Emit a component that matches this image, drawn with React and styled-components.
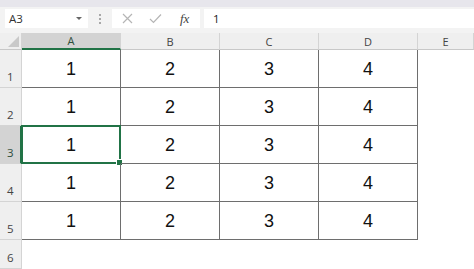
import React from 'react';
import styled, { createGlobalStyle } from 'styled-components';

const GlobalStyle = createGlobalStyle`
  html, body {
    margin: 0;
    padding: 0;
    background: #ffffff;
    overflow: hidden;
  }
  body {
    font-family: "Open Sans", "Noto Sans", sans-serif;
  }
`;

const green = '#217346';

const Page = styled.div`
  width: 474px;
  height: 269px;
  display: flex;
  flex-direction: column;
  overflow: hidden;
`;

const TopStrip = styled.div`
  flex-shrink: 0;
  height: 7px;
  background: #e7e6ec;
`;

const FormulaBar = styled.div`
  flex-shrink: 0;
  height: 26px;
  background: #f3f3f3;
  display: flex;
  align-items: flex-start;
  padding: 2px 0 0 5px;
  box-sizing: border-box;
`;

const NameBox = styled.div`
  width: 83px;
  height: 19px;
  background: #fff;
  display: flex;
  align-items: center;
  justify-content: space-between;
  padding: 0 6px 0 4px;
  box-sizing: border-box;
  font-size: 11.5px;
  color: #333;
`;

const Caret = styled.span`
  width: 0;
  height: 0;
  border-left: 3px solid transparent;
  border-right: 3px solid transparent;
  border-top: 3px solid #666;
`;

const Grip = styled.div`
  width: 24px;
  height: 19px;
  display: flex;
  flex-direction: column;
  align-items: center;
  justify-content: center;
  gap: 2px;
`;

const Dot = styled.span`
  width: 2px;
  height: 2px;
  background: #a8a8a8;
`;

const FuncBox = styled.div`
  width: 88px;
  height: 19px;
  background: #fff;
  display: flex;
  align-items: center;
  padding: 0 6px 0 10px;
  box-sizing: border-box;
  gap: 16px;
`;

const Fx = styled.span`
  font-family: "Liberation Serif", serif;
  font-style: italic;
  font-size: 13px;
  color: #444;
  margin-left: 2px;
`;

const Input = styled.div`
  flex: 1;
  height: 19px;
  margin-left: 4px;
  background: #fff;
  display: flex;
  align-items: center;
  padding-left: 9px;
  font-size: 11.5px;
  color: #222;
`;

const Sheet = styled.div`
  flex: 1;
  display: grid;
  grid-template-columns: 22px repeat(4, 99px) 1fr;
  grid-template-rows: 17px repeat(5, 38px) 1fr;
`;

const Corner = styled.div`
  background: #efefef;
  border-right: 1px solid #d4d4d4;
  border-bottom: 1px solid #c8c8c8;
  box-sizing: border-box;
  position: relative;
  &::after {
    content: '';
    position: absolute;
    right: 2px;
    bottom: 2px;
    width: 0;
    height: 0;
    border-left: 11px solid transparent;
    border-bottom: 11px solid #c9c9c9;
  }
`;

const ColHead = styled.div`
  background: ${(p) => (p.$active ? '#d3d3d3' : '#efefef')};
  border-right: 1px solid #d4d4d4;
  border-bottom: ${(p) => (p.$active ? `2px solid ${green}` : '1px solid #c8c8c8')};
  box-sizing: border-box;
  display: flex;
  align-items: center;
  justify-content: center;
  font-size: 11px;
  color: ${(p) => (p.$active ? '#2e4f3c' : '#444')};
`;

const RowHead = styled.div`
  background: ${(p) => (p.$active ? '#d3d3d3' : '#efefef')};
  border-right: ${(p) => (p.$active ? `2px solid ${green}` : '1px solid #d4d4d4')};
  border-bottom: 1px solid #d4d4d4;
  box-sizing: border-box;
  display: flex;
  align-items: flex-end;
  padding: 0 0 3px 7px;
  font-size: 11.5px;
  color: ${(p) => (p.$active ? '#2e4f3c' : '#444')};
`;

const Cell = styled.div`
  border-right: 1px solid #6e6e6e;
  border-bottom: 1px solid #6e6e6e;
  box-sizing: border-box;
  display: flex;
  align-items: center;
  justify-content: center;
  padding-top: 2px;
  font-family: "Liberation Sans", Arial, sans-serif;
  font-size: 18px;
  color: #111;
  position: relative;
`;

const Selection = styled.div`
  position: absolute;
  left: -1px;
  top: -1px;
  right: -1px;
  bottom: -1px;
  border: 2px solid ${green};
  pointer-events: none;
  &::after {
    content: '';
    position: absolute;
    right: -4px;
    bottom: -4px;
    width: 5px;
    height: 5px;
    background: ${green};
    border: 1px solid #fff;
  }
`;

const Blank = styled.div``;

const cols = ['A', 'B', 'C', 'D', 'E'];
const rows = [1, 2, 3, 4, 5, 6];

export default function App() {
  return (
    <Page>
      <GlobalStyle />
      <TopStrip />
      <FormulaBar>
        <NameBox>
          A3
          <Caret />
        </NameBox>
        <Grip>
          <Dot />
          <Dot />
          <Dot />
        </Grip>
        <FuncBox>
          <svg width="11" height="11" viewBox="0 0 11 11">
            <path d="M1 1 L10 10 M10 1 L1 10" stroke="#b5b5b5" strokeWidth="1.2" fill="none" />
          </svg>
          <svg width="13" height="11" viewBox="0 0 13 11">
            <path d="M1 6 L4.5 9.5 L12 1.5" stroke="#b5b5b5" strokeWidth="1.2" fill="none" />
          </svg>
          <Fx>fx</Fx>
        </FuncBox>
        <Input>1</Input>
      </FormulaBar>
      <Sheet>
        <Corner />
        {cols.map((c) => (
          <ColHead key={c} $active={c === 'A'}>
            {c}
          </ColHead>
        ))}
        {rows.map((r) => (
          <React.Fragment key={r}>
            <RowHead $active={r === 3}>{r}</RowHead>
            {r <= 5
              ? [1, 2, 3, 4].map((v) => (
                  <Cell key={v}>
                    {v}
                    {r === 3 && v === 1 && <Selection />}
                  </Cell>
                ))
              : [1, 2, 3, 4].map((v) => <Blank key={v} />)}
            <Blank />
          </React.Fragment>
        ))}
      </Sheet>
    </Page>
  );
}
